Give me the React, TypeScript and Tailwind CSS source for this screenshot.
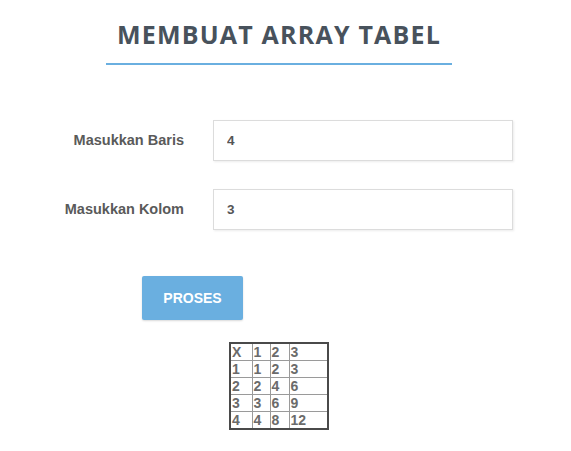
const rows = 4;
const cols = 3;

function ArrayTable() {
  const header = ["X", ...Array.from({ length: cols }, (_, i) => String(i + 1))];
  const body = Array.from({ length: rows }, (_, r) => [
    String(r + 1),
    ...Array.from({ length: cols }, (_, c) => String((r + 1) * (c + 1))),
  ]);
  const widths = ["w-[22px]", "w-[18px]", "w-[19px]", "w-auto"];

  return (
    <table className="w-[100px] table-fixed border-collapse border-2 border-[#4a4a4a] text-[14px] font-bold leading-[16px] text-[#6b6b6b]">
      <tbody>
        {[header, ...body].map((row, r) => (
          <tr key={r}>
            {row.map((cell, c) => (
              <td key={c} className={`${widths[c]} border border-[#9a9a9a] p-0 pl-px align-middle`}>
                {cell}
              </td>
            ))}
          </tr>
        ))}
      </tbody>
    </table>
  );
}

function Field({ label, value }: { label: string; value: string }) {
  return (
    <div className="flex items-center">
      <label className="w-[184px] text-right text-[14.5px] font-bold text-[#5a5a5a]">{label}</label>
      <input
        readOnly
        value={value}
        className="ml-[29px] h-[41px] w-[300px] border border-[#dcdcdc] bg-white px-[13px] text-[13.5px] font-bold text-[#555] shadow-[1px_1px_2px_rgba(0,0,0,0.08)] outline-none"
      />
    </div>
  );
}

export default function App() {
  return (
    <div className="h-[451px] w-[571px] bg-white font-['Liberation_Sans',Arial,sans-serif]">
      <div className="ml-[106px] w-[346px] pt-[18px]">
        <h1 className="text-center font-['Open_Sans',sans-serif] text-[25px] font-bold leading-[32px] tracking-[1.2px] text-[#48525c]">
          MEMBUAT ARRAY TABEL
        </h1>
        <div className="mt-[13px] h-[2px] bg-[#6aafe0]" />
      </div>

      <div className="mt-[55px] flex flex-col gap-[28px]">
        <Field label="Masukkan Baris" value="4" />
        <Field label="Masukkan Kolom" value="3" />
      </div>

      <div className="ml-[142px] mt-[46px]">
        <button className="h-[44px] w-[101px] rounded-[2px] bg-[#6aafe0] text-[14px] font-bold text-white shadow-[0_1px_2px_rgba(0,0,0,0.15)]">
          PROSES
        </button>
      </div>

      <div className="ml-[229px] mt-[22px]">
        <ArrayTable />
      </div>
    </div>
  );
}
